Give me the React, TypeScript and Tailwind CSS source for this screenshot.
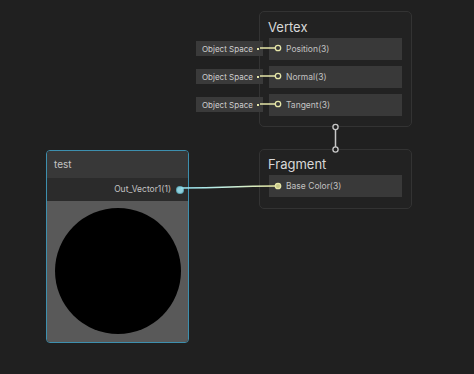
import React from 'react'

const font = { fontFamily: 'Inter, "Noto Sans", sans-serif' }

function PortRow({ label }: { label: string }) {
  return (
    <div className="flex h-[22px] items-center bg-[#393939] pl-[17px]">
      <span className="text-[8.5px] text-[#c2c2c2]">{label}</span>
    </div>
  )
}

function ObjectSpace({ top }: { top: number }) {
  return (
    <div className="absolute left-[196px] flex h-[15px] items-center" style={{ top }}>
      <div className="flex h-full w-[67px] items-center bg-[#3a3a3a] pl-[6px]">
        <span className="text-[8px] text-[#cfcfcf]">Object Space</span>
        <span className="ml-auto mr-[4px] h-[2px] w-[2px] bg-[#e6e6a8]" />
      </div>
    </div>
  )
}

export default function App() {
  return (
    <div className="relative h-[374px] w-[474px] overflow-hidden bg-[#202020]" style={font}>
      {/* ── Vertex block ───────────────────────────────── */}
      <div className="absolute left-[259px] top-[11px] flex w-[153px] flex-col rounded-[5px] border border-[#333333] bg-[#222222] px-[9px] pb-[10px]">
        <div className="flex h-[25px] items-end text-[13px] leading-none text-[#d8d8d8]">
          <span className="mb-[3px] -ml-[1px]">Vertex</span>
        </div>
        <div className="mt-[1px] flex flex-col gap-[6px]">
          <PortRow label="Position(3)" />
          <PortRow label="Normal(3)" />
          <PortRow label="Tangent(3)" />
        </div>
      </div>

      {/* ── Fragment block ─────────────────────────────── */}
      <div className="absolute left-[259px] top-[149px] flex w-[153px] flex-col rounded-[5px] border border-[#333333] bg-[#222222] px-[9px] pb-[11px]">
        <div className="flex h-[25px] items-end text-[13px] leading-none text-[#d8d8d8]">
          <span className="mb-[4px] -ml-[1px]">Fragment</span>
        </div>
        <PortRow label="Base Color(3)" />
      </div>

      <ObjectSpace top={41} />
      <ObjectSpace top={69} />
      <ObjectSpace top={97} />

      {/* ── test node ──────────────────────────────────── */}
      <div className="absolute left-[46px] top-[150px] flex h-[193px] w-[143px] flex-col overflow-hidden rounded-[4px] border border-[#3d8fae] bg-[#2d2d2d]">
        <div className="flex h-[27px] items-center bg-[#383838] pl-[7px] text-[10px] text-[#c4c4c4]">test</div>
        <div className="flex h-[23px] items-center justify-end bg-[#2b2b2b] pr-[5px]">
          <span className="text-[8.5px] text-[#c2c2c2]">Out_Vector1(1)</span>
          <span className="ml-[6px] h-[6px] w-[6px] rounded-full bg-[#8fd0dc] ring-1 ring-[#5ea9b8]" />
        </div>
        <div className="flex flex-1 items-center justify-center bg-[#595959] pb-[2px]">
          <div className="h-[126px] w-[126px] rounded-full bg-black" />
        </div>
      </div>

      {/* ── wires ──────────────────────────────────────── */}
      <svg className="pointer-events-none absolute left-0 top-0" width={474} height={374}>
        <defs>
          <linearGradient id="w" x1="180" y1="0" x2="276" y2="0" gradientUnits="userSpaceOnUse">
            <stop offset="0" stopColor="#8fe0f0" />
            <stop offset="0.5" stopColor="#c8f0e0" />
            <stop offset="1" stopColor="#e8e8a0" />
          </linearGradient>
        </defs>
        <path d="M181 188 C 230 188, 230 186, 275 186" stroke="url(#w)" strokeWidth={1.5} fill="none" />
        {[48, 76, 104].map(y => (
          <line key={y} x1={260} y1={y} x2={275} y2={y} stroke="#e6e6a8" strokeWidth={1.5} />
        ))}
        {[48, 76, 104].map(y => (
          <circle key={'c' + y} cx={278} cy={y} r={2.7} fill="#393939" stroke="#e6e6a8" strokeWidth={1.3} />
        ))}
        <circle cx={278} cy={186} r={2.7} fill="#c9c98a" stroke="#e6e6a8" strokeWidth={1.3} />
        <line x1={335.5} y1={128} x2={335.5} y2={148} stroke="#c8c8c8" strokeWidth={1.5} />
        <circle cx={335.5} cy={127} r={2.6} fill="#202020" stroke="#c8c8c8" strokeWidth={1.3} />
        <circle cx={335.5} cy={149.5} r={2.6} fill="#202020" stroke="#c8c8c8" strokeWidth={1.3} />
      </svg>
    </div>
  )
}
